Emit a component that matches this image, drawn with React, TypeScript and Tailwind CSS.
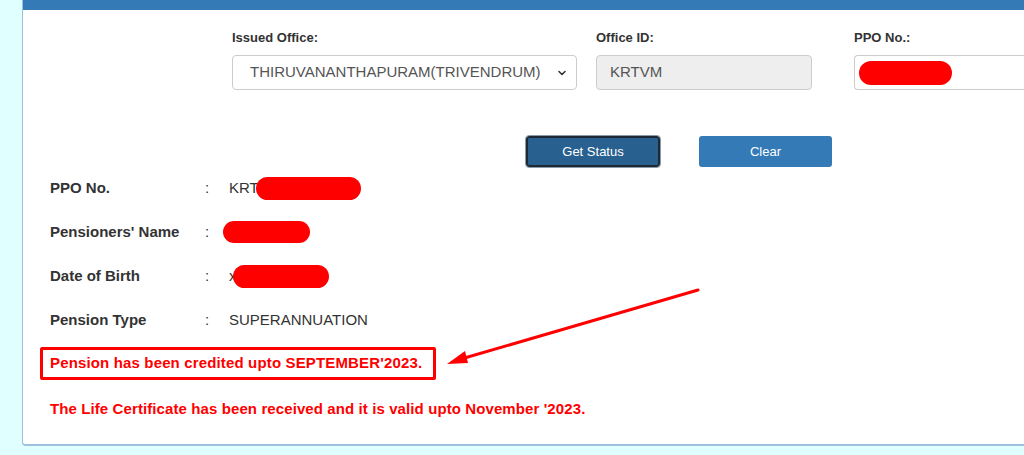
import React from "react";

interface DetailRow {
  label: string;
  value: React.ReactNode;
}

// red pill used to hide personal details in the screenshot
function Redacted({ className }: { className: string }) {
  return <span className={`inline-block rounded-full bg-[#ff0000] ${className}`} />;
}

const rows: DetailRow[] = [
  {
    label: "PPO No.",
    value: (
      <span className="flex items-center">
        KRT
        <Redacted className="-ml-[3px] h-[23px] w-[105px]" />
      </span>
    ),
  },
  {
    label: "Pensioners' Name",
    value: <Redacted className="-ml-[6px] h-[22px] w-[87px]" />,
  },
  {
    label: "Date of Birth",
    value: (
      <span className="flex items-center">
        x
        <Redacted className="-ml-[4px] h-[23px] w-[96px]" />
      </span>
    ),
  },
  { label: "Pension Type", value: "SUPERANNUATION" },
];

export default function App() {
  return (
    <div className="h-[455px] w-full overflow-hidden bg-[#e0ffff] pl-[22px] font-['Liberation_Sans',Arial,sans-serif] text-[#333]">
      <div className="relative h-[446px] rounded-bl-[4px] border-b-2 border-l border-[#9cc0dd] bg-white">
        {/* Panel heading */}
        <div className="h-[10px] bg-[#337ab7]" />

        {/* Search form */}
        <div className="flex pl-[209px] pt-[20px]">
          <div className="w-[345px] shrink-0">
            <label className="block text-[13px] font-bold leading-[15px]">Issued Office:</label>
            <div className="mt-[10px] flex h-[35px] items-center justify-between rounded-[4px] border border-[#ccc] pl-[17px] pr-[8px] text-[15px] text-[#555]">
              <span>THIRUVANANTHAPURAM(TRIVENDRUM)</span>
              <svg className="size-[12px]" viewBox="0 0 12 12" fill="none" stroke="#333" strokeWidth="1.6" strokeLinecap="round" strokeLinejoin="round">
                <path d="M3 4.5l3 3 3-3" />
              </svg>
            </div>
          </div>
          <div className="ml-[19px] w-[216px] shrink-0">
            <label className="block text-[13px] font-bold leading-[15px]">Office ID:</label>
            <div className="mt-[10px] flex h-[35px] items-center rounded-[4px] border border-[#ccc] bg-[#eee] pl-[13px] text-[15px] text-[#555]">
              KRTVM
            </div>
          </div>
          <div className="ml-[42px] w-[216px] shrink-0">
            <label className="block text-[13px] font-bold leading-[15px]">PPO No.:</label>
            <div className="mt-[10px] flex h-[35px] items-center rounded-l-[4px] border border-r-0 border-[#ccc] pl-[4px]">
              <Redacted className="h-[24px] w-[93px]" />
            </div>
          </div>
        </div>

        {/* Actions */}
        <div className="mt-[46px] flex pl-[503px]">
          <button
            type="button"
            className="h-[31px] w-[134px] rounded-[3px] border-2 border-[#1d2a36] bg-[#286090] text-[13px] text-white outline outline-1 outline-[#8a9aaa]"
          >
            Get Status
          </button>
          <button
            type="button"
            className="ml-[39px] h-[31px] w-[133px] rounded-[3px] bg-[#337ab7] text-[13px] text-white"
          >
            Clear
          </button>
        </div>

        {/* Pensioner details */}
        <div className="-mt-[1px] pl-[27px]">
          {rows.map((row) => (
            <div key={row.label} className="flex h-[44px] items-center text-[15px]">
              <span className="w-[155px] font-bold">{row.label}</span>
              <span className="w-[24px]">:</span>
              {row.value}
            </div>
          ))}
        </div>

        {/* Status messages */}
        <div className="ml-[17px] mt-[5px] flex h-[33px] w-[396px] items-center rounded-[2px] border-[3px] border-[#ff0000] pl-[7px] text-[15px] font-bold tracking-[0.15px] text-[#ff0000]">
          Pension has been credited upto SEPTEMBER'2023.
        </div>
        <p className="mt-[18px] pl-[27px] text-[15px] font-bold tracking-[0.1px] text-[#ff0000]">
          The Life Certificate has been received and it is valid upto November '2023.
        </p>

        {/* Annotation arrow */}
        <svg className="absolute left-[398px] top-[281px]" width="290" height="100" viewBox="0 0 290 100">
          <line x1="277" y1="9" x2="40" y2="78" stroke="#ff0000" strokeWidth="3" strokeLinecap="round" />
          <path d="M26 83 L44 70 L47 82 Z" fill="#ff0000" />
        </svg>
      </div>
    </div>
  );
}
